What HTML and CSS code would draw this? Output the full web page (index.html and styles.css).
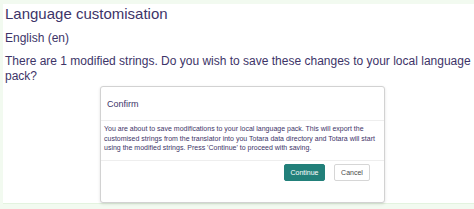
FILE: index.html
```html
<!DOCTYPE html>
<html lang="en">
<head>
    <meta charset="UTF-8">
    <title>Language customisation</title>
    <link rel="stylesheet" href="styles.css">
</head>
<body>
    <div class="page">
        <h2 class="title">Language customisation</h2>
        <div class="lang">English (en)</div>
        <p class="question">There are 1 modified strings. Do you wish to save these changes to your local language pack?</p>

        <!-- Dialogo de confirmacao -->
        <div class="dialog">
            <div class="dialog-header">Confirm</div>
            <div class="dialog-body">
                You are about to save modifications to your local language pack. This will export the
                customised strings from the translator into you Totara data directory and Totara will start
                using the modified strings. Press 'Continue' to proceed with saving.
            </div>
            <div class="dialog-footer">
                <button class="btn primary">Continue</button>
                <button class="btn">Cancel</button>
            </div>
        </div>
    </div>
</body>
</html>
```
FILE: styles.css
```css
* {
    margin: 0;
    padding: 0;
    box-sizing: border-box;
}

body {
    font-family: 'Liberation Sans', Arial, sans-serif;
    background-color: #f2faf0;
    color: #3d3468;
    width: 474px;
    height: 209px;
    overflow: hidden;
}

.page {
    background-color: #fff;
    margin: 4px 0 0 3px;
    height: 200px;
    padding: 0 0 0 2px;
    border-bottom: 1px solid #e3f3df;
}

.title {
    font-size: 15px;
    font-weight: normal;
    line-height: 20px;
}

.lang {
    font-size: 12px;
    line-height: 15px;
    margin-top: 7px;
}

.question {
    font-size: 12px;
    line-height: 15px;
    margin-top: 8px;
}

.dialog {
    width: 285px;
    margin: 2px 0 0 95px;
    height: 117px;
    border: 1px solid #d2d2d2;
    border-radius: 3px;
    box-shadow: 0 1px 3px rgba(0, 0, 0, 0.12);
    background-color: #fff;
}

.dialog-header {
    font-size: 9px;
    line-height: 12px;
    padding: 11px 6px 10px;
    border-bottom: 1px solid #eeeeee;
}

.dialog-body {
    font-size: 7px;
    line-height: 9.6px;
    padding: 3px 5px 7px 3px;
    border-bottom: 1px solid #eeeeee;
}

.dialog-footer {
    display: flex;
    justify-content: flex-end;
    gap: 9px;
    padding: 3px 14px;
}

.btn {
    font-family: inherit;
    font-size: 7px;
    height: 17px;
    width: 36px;
    border: 1px solid #d6d6d6;
    border-radius: 2px;
    background-color: #fff;
    color: #4a4a4a;
}

.btn.primary {
    width: 41px;
    background-color: #22807a;
    border-color: #22807a;
    color: #fff;
}
```
